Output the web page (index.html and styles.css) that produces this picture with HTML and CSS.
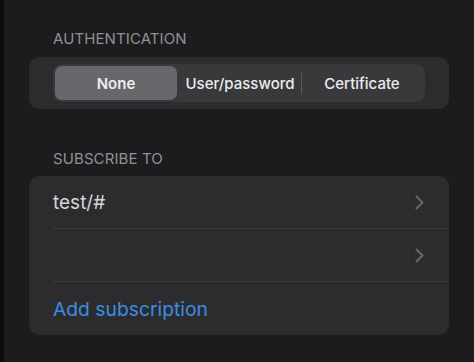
FILE: index.html
```html
<!DOCTYPE html>
<html>
<head>
<meta charset="utf-8">
<link rel="stylesheet" href="styles.css">
</head>
<body>
<div class="page">
  <div class="section-title">AUTHENTICATION</div>
  <div class="card auth-card">
    <div class="segmented">
      <div class="seg selected">None</div>
      <div class="seg">User/password</div>
      <div class="seg divided">Certificate</div>
    </div>
  </div>

  <div class="section-title second">SUBSCRIBE TO</div>
  <div class="card list">
    <div class="row">
      <span class="row-text">test/#</span>
      <svg class="chev" width="9" height="15" viewBox="0 0 9 15"><path d="M1.5 1.5 L7.5 7.5 L1.5 13.5" fill="none" stroke="#67676b" stroke-width="2" stroke-linecap="round" stroke-linejoin="round"/></svg>
    </div>
    <div class="row">
      <span class="row-text"></span>
      <svg class="chev" width="9" height="15" viewBox="0 0 9 15"><path d="M1.5 1.5 L7.5 7.5 L1.5 13.5" fill="none" stroke="#67676b" stroke-width="2" stroke-linecap="round" stroke-linejoin="round"/></svg>
    </div>
    <div class="row last">
      <span class="row-link">Add subscription</span>
    </div>
  </div>
</div>
</body>
</html>
```
FILE: styles.css
```css
html, body {
  margin: 0;
  padding: 0;
  height: 100%;
  background: #1c1c1e;
}
body {
  border-left: 4px solid #0c0c0d;
  box-sizing: border-box;
  font-family: Inter, "Liberation Sans", sans-serif;
  -webkit-font-smoothing: antialiased;
}
.page {
  padding: 30px 25px 0 25px;
  width: 420px;
}
.section-title {
  font-size: 15px;
  line-height: 18px;
  color: #909095;
  padding-left: 24px;
  margin-bottom: 9px;
  letter-spacing: 0.1px;
}
.section-title.second {
  margin-top: 41px;
  margin-bottom: 8px;
}
.card {
  background: #2c2c2e;
  border-radius: 11px;
}
.auth-card {
  padding: 7px 24px;
}
.segmented {
  display: flex;
  height: 38px;
  background: #39393c;
  border-radius: 9px;
  padding: 2px;
  box-sizing: border-box;
}
.seg {
  flex: 1;
  display: flex;
  align-items: center;
  justify-content: center;
  font-size: 15px;
  color: #ececee;
  font-weight: 500;
  position: relative;
}
.seg.selected {
  background: #68686c;
  border-radius: 7px;
  font-weight: 600;
  margin-right: 2px;
}
.seg.divided::before {
  content: "";
  position: absolute;
  left: 0;
  top: 7px;
  bottom: 6px;
  width: 1px;
  background: #58585c;
}
.list {
  overflow: hidden;
}
.row {
  display: flex;
  align-items: center;
  justify-content: space-between;
  height: 52px;
  margin-left: 24px;
  padding-right: 25px;
  border-bottom: 1px solid #3b3b3e;
}
.row.last {
  border-bottom: none;
  height: 53px;
}
.row-text {
  font-size: 19px;
  color: #d6d6d8;
}
.row-link {
  font-size: 19.3px;
  color: #3b8ee2;
}
.chev {
  display: block;
}
```
